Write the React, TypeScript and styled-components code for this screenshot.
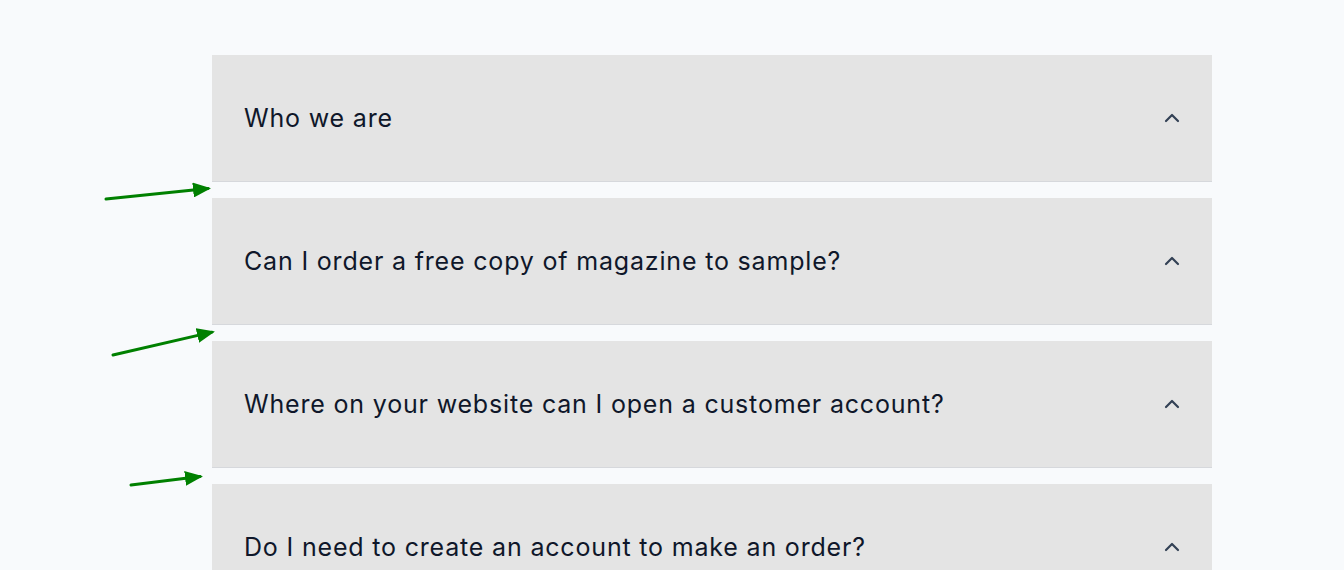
import React from 'react';
import styled, { createGlobalStyle } from 'styled-components';
import { ChevronUp } from 'lucide-react';

const questions = [
  'Who we are',
  'Can I order a free copy of magazine to sample?',
  'Where on your website can I open a customer account?',
  'Do I need to create an account to make an order?',
];

const arrows = [
  { x1: 106, y1: 199, x2: 213, y2: 188 },
  { x1: 113, y1: 355, x2: 217, y2: 331 },
  { x1: 131, y1: 485, x2: 205, y2: 476 },
];

export default function App() {
  return (
    <>
      <GlobalStyle />
      <Page>
        <List>
          {questions.map((q) => (
            <Item key={q}>
              <Question>{q}</Question>
              <Toggle type="button" aria-label="toggle">
                <ChevronUp size={24} strokeWidth={2.2} />
              </Toggle>
            </Item>
          ))}
        </List>
        <Overlay width="1344" height="570" viewBox="0 0 1344 570">
          <defs>
            <marker id="head" markerWidth="6" markerHeight="5" refX="5" refY="2.5" orient="auto" markerUnits="strokeWidth">
              <path d="M0 0 L6 2.5 L0 5 Z" fill="#008000" />
            </marker>
          </defs>
          {arrows.map((a, i) => (
            <line
              key={i}
              x1={a.x1}
              y1={a.y1}
              x2={a.x2 - 5}
              y2={a.y2 + ((a.y1 - a.y2) * 5) / (a.x2 - a.x1)}
              stroke="#008000"
              strokeWidth={3}
              strokeLinecap="round"
              markerEnd="url(#head)"
            />
          ))}
        </Overlay>
      </Page>
    </>
  );
}

const GlobalStyle = createGlobalStyle`
  html, body {
    margin: 0;
    padding: 0;
    background: #f8fafc;
    overflow: hidden;
  }
`;

const Page = styled.main`
  position: relative;
  height: 570px;
  padding: 55px 132px 0 212px;
  box-sizing: border-box;
  font-family: Inter, 'Liberation Sans', sans-serif;
`;

const List = styled.div`
  display: flex;
  flex-direction: column;
  gap: 16px;
  width: 1000px;
`;

const Item = styled.div`
  display: flex;
  align-items: center;
  justify-content: space-between;
  height: 127px;
  box-sizing: border-box;
  padding: 0 28px 0 32px;
  background: #e4e4e4;
  border-bottom: 1px solid #d6d8dc;
`;

const Question = styled.h3`
  margin: 0;
  font-size: 25px;
  font-weight: 400;
  letter-spacing: 0.82px;
  color: #0f172a;
`;

const Toggle = styled.button`
  display: flex;
  padding: 0;
  border: none;
  background: none;
  color: #334155;
`;

const Overlay = styled.svg`
  position: absolute;
  top: 0;
  left: 0;
  pointer-events: none;
`;
